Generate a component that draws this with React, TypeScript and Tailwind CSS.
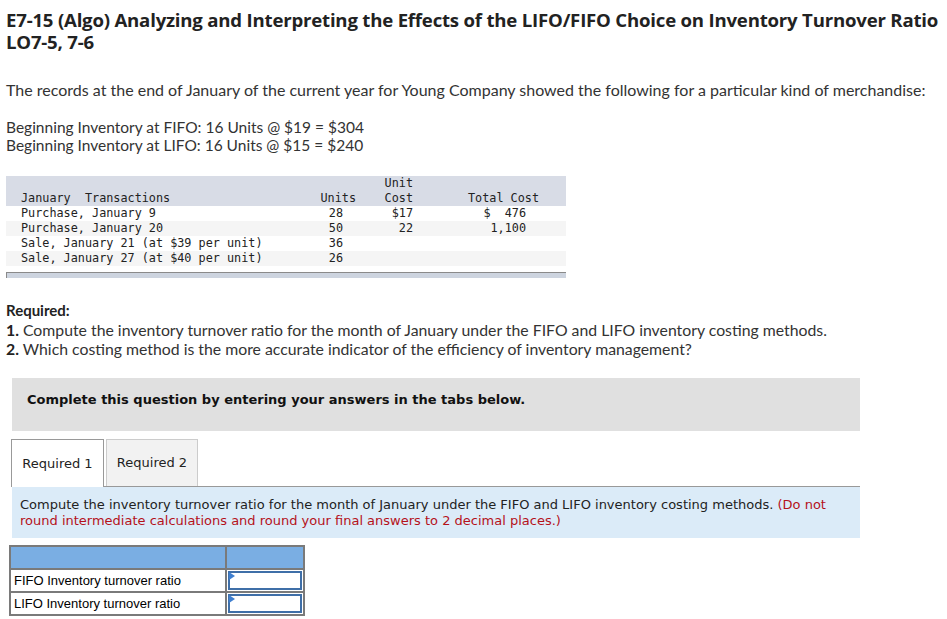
import React from "react";

const sans = { fontFamily: "Lato, 'Open Sans', Arial, sans-serif" };

type Row = { label: string; units: string; cost: string; total: string };

const rows: Row[] = [
  { label: "Purchase, January 9", units: "28", cost: "$17", total: "$  476" },
  { label: "Purchase, January 20", units: "50", cost: "22", total: "1,100" },
  { label: "Sale, January 21 (at $39 per unit)", units: "36", cost: "", total: "" },
  { label: "Sale, January 27 (at $40 per unit)", units: "26", cost: "", total: "" },
];

function InputCell() {
  return (
    <div className="relative h-full w-full p-[1px]">
      <div className="h-full w-full border-2 border-[#3f6fa8] bg-white" />
      <span className="absolute left-[2px] top-[2px] h-0 w-0 border-y-[4px] border-l-[6px] border-y-transparent border-l-[#3f7fd0]" />
    </div>
  );
}

export default function App() {
  return (
    <div className="min-h-[619px] overflow-hidden bg-white text-[#333]" style={sans}>
      <div className="px-[6px] pt-[9px]">
        <h1
          className="whitespace-nowrap text-[18.6px] font-bold leading-[22px] tracking-[-0.2px] text-[#222]"
          style={{ fontFamily: "'Open Sans', Lato, Arial, sans-serif" }}
        >
          <div>E7-15 (Algo) Analyzing and Interpreting the Effects of the LIFO/FIFO Choice on Inventory Turnover Ratio</div>
          <div>LO7-5, 7-6</div>
        </h1>

        <p className="mt-[28px] text-[16px] leading-[18px]">
          The records at the end of January of the current year for Young Company showed the following for a particular kind of merchandise:
        </p>

        <div className="mt-[19px] text-[15.5px] leading-[18px]">
          <div>Beginning Inventory at FIFO: 16 Units @ $19 = $304</div>
          <div>Beginning Inventory at LIFO: 16 Units @ $15 = $240</div>
        </div>

        {/* transactions table */}
        <div
          className="mt-[22px] w-[560px] text-[11.8px] leading-[15px] text-[#222]"
          style={{ fontFamily: "'DejaVu Sans Mono', 'Liberation Mono', monospace" }}
        >
          <div className="flex h-[30px] items-end bg-[#d8dce6]">
            <div className="w-[300px] pl-[15px]">January&nbsp; Transactions</div>
            <div className="w-[50px] text-right">Units</div>
            <div className="w-[57px] text-right">
              Unit
              <br />
              Cost
            </div>
            <div className="w-[126px] text-right">Total Cost</div>
          </div>
          {rows.map((r, i) => (
            <div key={i} className={`flex h-[15px] ${i % 2 ? "bg-[#f5f5f5]" : "bg-white"}`}>
              <div className="w-[300px] pl-[15px] whitespace-pre">{r.label}</div>
              <div className="w-[50px] pr-[13px] text-right">{r.units}</div>
              <div className="w-[57px] text-right">{r.cost}</div>
              <div className="w-[126px] pr-[13px] text-right whitespace-pre">{r.total}</div>
            </div>
          ))}
          <div className="mt-[6px] h-[6px] border-l border-t border-[#8a8a8a] bg-[#cdd4df]" />
        </div>

        <div className="mt-[23px] leading-[19px]">
          <div className="text-[15px] font-bold text-[#222]">Required:</div>
          <div className="text-[15.8px]">
            <span className="font-bold text-[#222]">1.</span> Compute the inventory turnover ratio for the month of January under the FIFO and LIFO inventory costing methods.
          </div>
          <div className="text-[15.8px]">
            <span className="font-bold text-[#222]">2.</span> Which costing method is the more accurate indicator of the efficiency of inventory management?
          </div>
        </div>
      </div>

      <div style={{ fontFamily: "Tahoma, 'DejaVu Sans', Verdana, sans-serif" }}>
        <div className="ml-[12px] mt-[20px] h-[53px] w-[848px] bg-[#e0e0e0] pl-[15px] pt-[14px] text-[13px] font-bold leading-[16px] text-[#111]">
          Complete this question by entering your answers in the tabs below.
        </div>

        <div className="ml-[11px] mt-[8px] flex h-[48px] w-[849px] items-end border-b border-[#999]">
          <div className="relative -mb-[1px] flex h-[48px] w-[93px] items-center justify-center border border-b-0 border-[#999] bg-white text-[13px] text-[#222]">
            Required 1
          </div>
          <div className="ml-[2px] flex h-[47px] w-[92px] items-center justify-center border border-b-0 border-[#ccc] bg-[#f2f2f2] text-[13px] text-[#222]">
            Required 2
          </div>
        </div>

        <div className="ml-[12px] w-[848px] bg-[#dbebf8] px-[8px] pb-[9px] pt-[10px] text-[13px] leading-[16px] text-[#222]">
          Compute the inventory turnover ratio for the month of January under the FIFO and LIFO inventory costing methods.{" "}
          <span className="text-[#b5121b]">(Do not round intermediate calculations and round your final answers to 2 decimal places.)</span>
        </div>

        <div
          className="ml-[9px] mt-[7px] grid w-[296px] grid-cols-[216px_78px] border-l-2 border-t-2 border-[#7a7a7a] text-[13px] text-black"
          style={{ fontFamily: "'Liberation Sans', Arial, sans-serif" }}
        >
          <div className="h-[23px] border-b-2 border-r-2 border-[#7a7a7a] bg-[#7aaee3]" />
          <div className="h-[23px] border-b-2 border-r-2 border-[#7a7a7a] bg-[#7aaee3]" />
          <div className="flex h-[23px] items-center border-b-2 border-r-2 border-[#7a7a7a] pl-[3px]">FIFO Inventory turnover ratio</div>
          <div className="h-[23px] border-b-2 border-r-2 border-[#7a7a7a]">
            <InputCell />
          </div>
          <div className="flex h-[23px] items-center border-b-2 border-r-2 border-[#7a7a7a] pl-[3px]">LIFO Inventory turnover ratio</div>
          <div className="h-[23px] border-b-2 border-r-2 border-[#7a7a7a]">
            <InputCell />
          </div>
        </div>
      </div>
    </div>
  );
}
